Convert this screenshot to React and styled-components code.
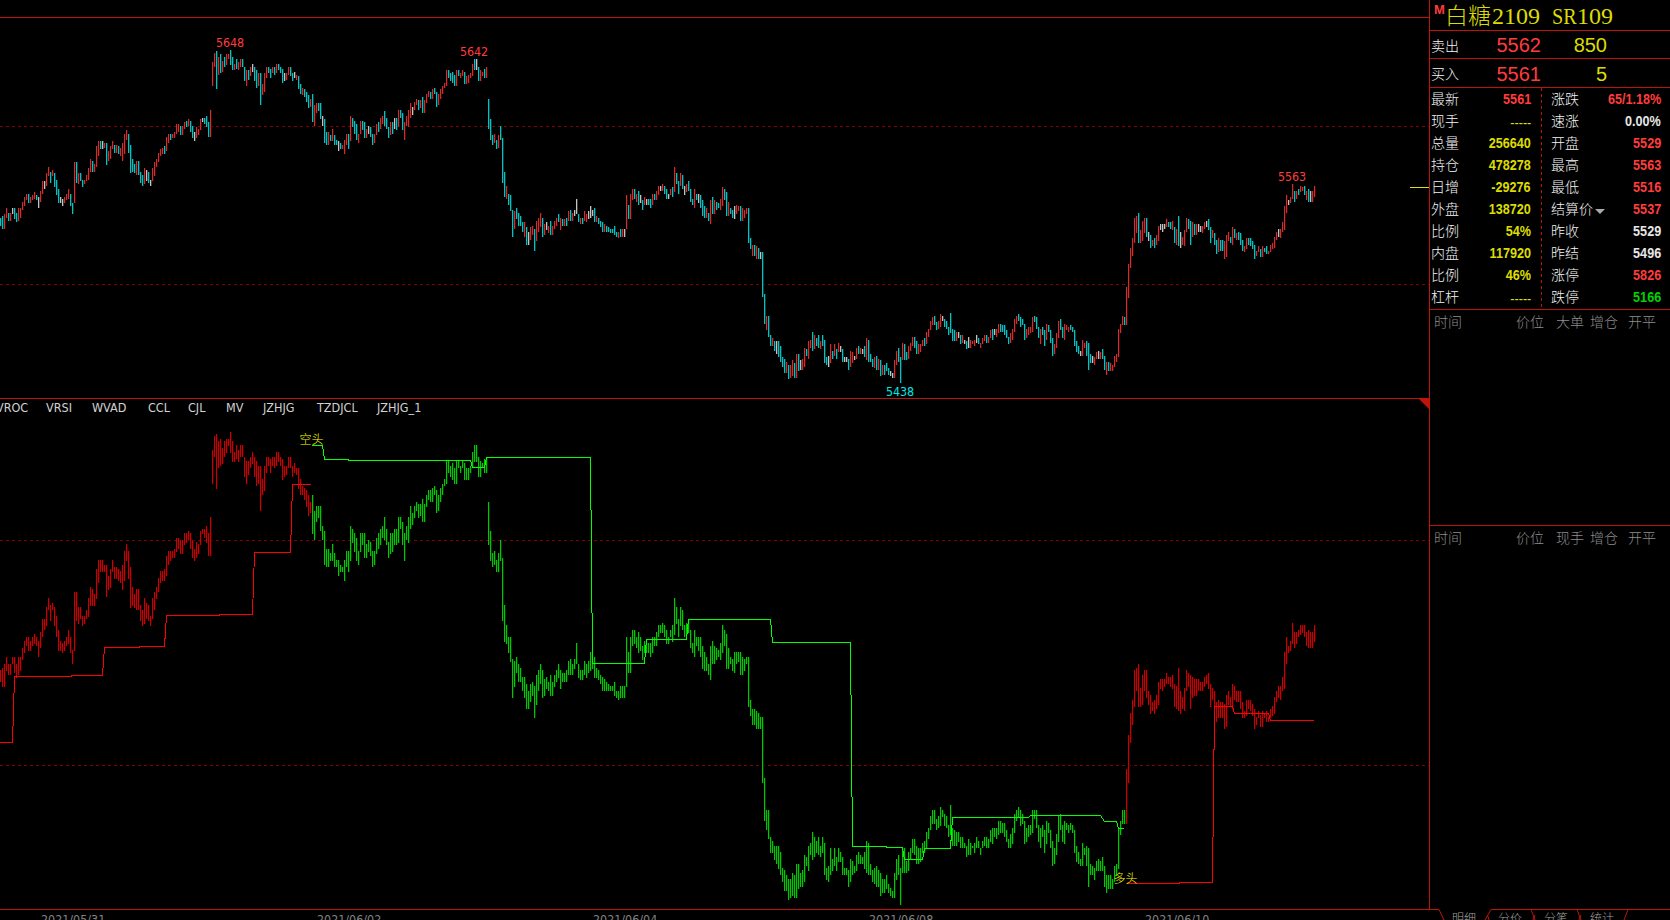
import React from 'react'
import styled, { createGlobalStyle } from 'styled-components'

// one bar every 2px: colour (r up, c down, w flat), high y, low y
const BARS = `
c218-226 c216-229 r214-229 r208-218 c213-221 r213-221 w208-214 c208-219 c213-222 r208-221
r208-218 r202-210 r197-206 r194-200 c194-203 r197-203 r195-200 r192-199 c195-200 w197-208
r191-202 r181-194 w181-189 r173-186 r167-176 c172-183 r170-176 c173-187 c180-195 c189-203
w197-203 w199-206 r197-203 r194-200 r189-199 c194-206 c203-214 r162-203 c162-183 r173-184
c173-181 c180-187 r180-184 r175-181 r168-180 r159-172 c161-172 r164-172 r146-167 r141-156
c141-149 w141-149 r143-148 c143-165 r151-161 r146-159 r141-149 c145-153 r145-153 c146-154
r148-156 r143-161 r134-154 r130-140 c134-153 c145-173 c159-172 c164-173 r161-175 c161-175
c172-183 c175-186 r168-184 w170-181 c172-183 w180-186 r168-181 r162-176 r159-167 r153-162
r149-156 r148-154 c146-154 r137-151 r134-143 c134-140 r134-138 r132-138 r124-134 r124-132
c126-135 r126-135 r122-129 c121-127 r119-126 c121-132 c126-138 w132-141 r127-138 r129-135
r119-130 w118-122 c118-124 c116-127 c122-137 r110-137 r62-86 r53-67 c51-89 r57-75
c54-73 r61-72 c57-67 r54-65 r54-59 c50-65 c57-70 r64-70 c59-69 r62-70
r59-67 c59-67 c67-81 r70-86 c70-80 r67-76 w64-72 c67-81 c70-88 r73-86
c73-105 r84-95 r73-92 r67-78 c67-73 c69-78 r67-73 c67-75 r64-73 c64-70
c67-73 c69-83 w73-81 r73-80 r67-75 c67-76 c73-81 w72-78 r75-80 c76-89
c84-94 r88-95 c89-97 c92-102 c95-108 r99-107 c94-122 r105-126 r103-113 c103-111
c103-119 w116-126 c119-143 c132-145 r132-145 c135-141 r129-141 c135-145 c140-145 w141-151
c143-149 r145-149 r140-154 r134-145 c134-149 r116-141 c118-127 c121-134 c124-140 r134-143
r121-134 c121-130 c122-138 r129-138 w126-134 c127-137 c134-145 r134-143 r124-135 c122-132
r118-129 r116-124 c111-126 c118-129 c127-138 r122-135 c122-134 w118-129 c118-130 r110-127
c110-118 c113-130 r122-140 r116-126 r110-127 r103-118 w107-115 r102-110 r99-105 c100-110
r100-108 c97-113 r100-113 r94-103 r91-97 c92-99 r89-99 c88-94 c92-107 r94-105
r89-99 r86-94 r83-88 r70-86 c70-78 c73-81 c72-83 c75-86 r70-86 c70-76
r73-78 r70-76 c72-84 r76-84 r75-83 r73-78 r64-76 c59-70 w59-70 c67-81
r70-81 r72-76 c69-78 r67-78 c99-129 c119-140 c135-145 r134-143 c140-149 r135-148
c126-140 c138-183 c172-197 r186-199 c194-205 c195-211 c210-237 r211-229 c208-219 c213-226
c216-226 c222-232 r222-237 c227-245 w232-245 r227-240 r226-235 c229-251 r221-241 r218-232
r213-227 c218-237 r224-235 w222-230 r226-233 c221-235 r226-235 r221-229 r218-226 c214-222
r218-230 c219-226 r219-226 c218-226 r211-221 c210-221 r213-221 w210-216 w199-214 c214-222
r218-224 c218-224 r211-221 r214-222 w211-219 w206-218 w210-216 c208-222 r216-222 c218-224
c221-227 c222-232 r224-232 c226-232 c227-232 c229-233 c229-233 c226-235 c232-237 r232-238
c229-237 r229-237 w229-237 r195-229 c205-219 r194-219 r189-200 c189-199 r194-202 c191-205
w195-203 c200-210 r197-205 w199-205 c199-205 c199-208 r194-205 c194-200 r191-200 r186-195
w186-191 r184-191 c186-194 c189-199 w194-199 r189-195 c187-197 r167-192 c173-184 c181-194
r173-186 c175-189 w186-195 r184-192 c181-191 c189-202 c199-205 r189-208 c194-200 w194-203
c195-208 c200-216 c206-218 r208-218 c213-221 r200-224 c197-214 r200-214 c202-210 c203-208
r199-210 r187-206 c189-200 c192-216 r202-216 c208-214 c210-218 w206-219 r205-214 r206-211
c206-221 r208-221 r210-218 r208-214 c208-243 c238-249 r245-256 c245-256 r246-259 c248-259
w252-259 c252-297 c294-324 r316-330 c316-337 c335-346 r338-346 c341-351 w341-354 c341-357
c346-362 c357-367 c359-373 r362-373 c365-379 r365-378 r360-376 c363-378 r354-378 c354-371
w360-370 r359-370 r348-367 c349-356 r341-359 r340-348 c332-351 r335-349 c338-346 c335-348
r341-349 c335-346 c340-363 c357-365 w356-367 r344-363 c351-359 r344-356 c349-359 r343-352
w346-352 c349-362 w357-362 w357-362 c359-370 r351-367 r352-363 w356-360 r348-359 c346-354
r348-354 w349-354 c346-357 r338-360 c340-362 c354-362 c359-367 r357-368 c356-370 r359-370
c360-376 r365-375 c365-375 c363-371 c368-375 w371-376 w373-378 r360-378 r351-365 c348-362
c357-383 r343-360 c344-360 c352-360 r346-359 r343-351 r337-346 c337-348 c341-354 r344-354
r344-352 r340-346 c338-346 r332-344 r329-337 r321-330 r317-325 c316-325 c322-330 r321-329
r314-327 w316-321 c319-327 c321-329 c327-335 c313-333 c329-341 c330-341 r332-341 w332-338
c335-344 r335-343 w340-344 c341-349 w337-348 r340-348 r341-344 r340-346 w335-343 c338-344
r343-348 r338-344 r335-341 c335-343 r337-343 r330-338 c329-340 w329-335 r329-337 r324-333
c324-332 c325-332 c325-335 c330-338 c337-344 r333-343 r329-340 r319-332 r316-324 c314-321
c317-327 c319-325 c324-340 r329-338 r327-335 r327-333 r317-332 c316-322 c317-329 c327-338
r329-344 c327-335 c330-346 r324-340 c325-332 c330-343 c338-356 r344-354 r333-348 r321-338
c319-330 c327-338 r324-340 r325-330 r327-332 c325-330 c327-332 c330-346 c341-352 c346-354
w351-356 r340-356 r343-348 c341-356 c343-370 c354-363 w356-363 r357-365 r352-359 w351-359
r352-359 c349-359 c356-370 r362-375 c362-371 r363-371 r365-371 r356-367 r354-362 r329-357
r324-333 r316-325 c317-325 r287-325 r264-298 r248-268 r238-256 r218-243 r216-233 c213-243
r230-243 r221-241 r218-233 c218-237 w232-241 c235-248 r240-246 c238-248 r235-245 r226-241
w224-230 w224-232 w224-229 r219-227 c222-227 c222-229 r221-230 c227-243 r229-245 c216-246
w232-248 r237-245 r230-246 r218-232 c219-229 c221-245 r222-237 c224-235 r224-235 w224-232
w226-232 r226-233 r222-229 w221-227 c219-230 c227-243 r230-238 c233-245 c240-254 r238-252
c240-251 c240-251 r241-259 r235-257 r232-241 c237-243 r227-245 c229-238 r233-240 c232-240
c233-245 c240-251 r246-252 r238-249 c238-245 c238-246 c241-249 c245-259 r251-256 r246-252
c249-257 r246-257 c248-252 c246-254 r251-254 r245-252 r243-249 r237-248 r232-240 w229-237
r229-238 r222-232 r206-230 r195-213 w200-205 r197-203 r184-199 c191-202 r191-199 c189-195
r186-192 r187-191 c186-195 r191-200 c189-202 w191-202 r191-202 r186-197
`.trim().split(/\s+/).map((s, i) => {
    const [top, bottom] = s.slice(1).split('-').map(Number)
    return { x: i * 2, kind: s[0], top, bottom }
})

const COLORS = {
    r: ['#d22d2d', '#340a0a'],
    c: ['#00c3c3', '#003e3e'],
    w: ['#c3c3c3', '#3c3c3c'],
}

// same ticks drawn on the taller scale of the indicator pane
const ticks = (y) => Math.round((y - 50) / 1.585)
const toIndicator = (y) => 432 + ticks(y) * 2.248

const SHORT_FROM = 312
const LONG_FROM = 1126

const LONG_LINE = '-1,742 12,742 14,676 71,676 71,675 102,675 104,647 139,647 139,646 164,646 166,615 219,615 219,614 252,614 254,552 290,552 292,484 310,484'
const SHORT_LINE = '311,445 322,445 324,459 348,459 348,460 470,460 472,467 484,467 486,457 590,457 592,663 644,663 646,639 686,639 688,619 770,619 772,642 850,642 852,846 886,846 886,847 902,847 904,859 922,859 924,848 950,848 952,817 1028,817 1030,815 1100,815 1104,821 1116,821 1118,828 1123,828'
const LONG_LINE_2 = '1126,883 1179,883 1179,882 1212,882 1214,706 1232,706 1234,713 1268,713 1270,720 1313,720'

const INDICATORS = [
    ['VROC', 50], ['VRSI', 46], ['WVAD', 56], ['CCL', 40], ['CJL', 38],
    ['MV', 37], ['JZHJG', 54], ['TZDJCL', 60], ['JZHJG_1', 60],
]

const DATES = [
    ['2021/05/31', 276], ['2021/06/02', 276], ['2021/06/04', 276],
    ['2021/06/08', 276], ['2021/06/10', 100],
]

const RED = '#ff3c3c'
const YELLOW = '#dcdc00'
const WHITE = '#e6e6e6'
const GREEN = '#00d200'

const QUOTES = [
    ['最新', '5561', RED, '涨跌', '65/1.18%', RED],
    ['现手', '-----', YELLOW, '速涨', '0.00%', WHITE],
    ['总量', '256640', YELLOW, '开盘', '5529', RED],
    ['持仓', '478278', YELLOW, '最高', '5563', RED],
    ['日增', '-29276', YELLOW, '最低', '5516', RED],
    ['外盘', '138720', YELLOW, '结算价', '5537', RED],
    ['比例', '54%', YELLOW, '昨收', '5529', WHITE],
    ['内盘', '117920', YELLOW, '昨结', '5496', WHITE],
    ['比例', '46%', YELLOW, '涨停', '5826', RED],
    ['杠杆', '-----', YELLOW, '跌停', '5166', GREEN],
]

function GridLine({ y, color }) {
    return <line x1="0" x2="1429" y1={y + 0.5} y2={y + 0.5} stroke={color} strokeDasharray="3 3" />
}

function PriceChart() {
    return (
        <Chart viewBox="0 18 1429 380" height="380">
            <GridLine y={126} color="#820000" />
            <GridLine y={284} color="#820000" />
            {BARS.map(({ x, kind, top, bottom }) => (
                <g key={x}>
                    <rect x={x} y={top} width="1" height={bottom - top} fill={COLORS[kind][0]} />
                    <rect x={x + 1} y={top} width="1" height={bottom - top} fill={COLORS[kind][1]} />
                </g>
            ))}
            <Mark x="216" y="47" textLength="28" fill={RED}>5648</Mark>
            <Mark x="460" y="56" textLength="28" fill={RED}>5642</Mark>
            <Mark x="1278" y="181" textLength="28" fill={RED}>5563</Mark>
            <Mark x="886" y="396" textLength="28" fill="#00e6e6">5438</Mark>
            <rect x="1410" y="187" width="19" height="1" fill="#e1e100" />
        </Chart>
    )
}

function IndicatorChart() {
    return (
        <Chart viewBox="0 417 1429 492" height="492">
            <GridLine y={540} color="#820000" />
            <GridLine y={765} color="#820000" />
            {BARS.map(({ x, top, bottom }) => {
                const short = x >= SHORT_FROM && x < LONG_FROM
                const y = Math.round(toIndicator(top))
                const height = Math.round(toIndicator(bottom) + 0.5) - y
                return (
                    <g key={x}>
                        <rect x={x} y={y} width="1" height={height} fill={short ? '#00c800' : '#c80000'} />
                        <rect x={x + 1} y={y} width="1" height={height} fill={short ? '#003200' : '#320000'} />
                    </g>
                )
            })}
            <Steps points={LONG_LINE} stroke="#f00" />
            <Steps points={SHORT_LINE} stroke="#0f0" />
            <Steps points={LONG_LINE_2} stroke="#f00" />
            <Signal x="299.5" y="444">空头</Signal>
            <Signal x="1113.5" y="883">多头</Signal>
        </Chart>
    )
}

function TradeList({ columns, height }) {
    return (
        <Trades $height={height}>
            <TradeHead>
                {columns.map((c) => <span key={c}>{c}</span>)}
            </TradeHead>
        </Trades>
    )
}

function QuotePanel() {
    return (
        <Side>
            <Title>
                <Main>M</Main>
                <Name>白糖</Name>
                <Code>2109</Code>
                <Letters>SR</Letters>
                <Code>109</Code>
            </Title>
            <Level $height={28}>
                <Label>卖出</Label>
                <Price>5562</Price>
                <Volume>850</Volume>
            </Level>
            <Level $height={29}>
                <Label>买入</Label>
                <Price>5561</Price>
                <Volume>5</Volume>
            </Level>
            <Quotes>
                <Column>
                    {QUOTES.map(([label, value, color], i) => (
                        <Quote key={i}>
                            <Label>{label}</Label>
                            <Value $color={color} $empty={value === '-----'}>{value}</Value>
                        </Quote>
                    ))}
                </Column>
                <Divider />
                <Column>
                    {QUOTES.map(([, , , label, value, color]) => (
                        <Quote key={label}>
                            <Label>{label}{label === '结算价' && <Arrow />}</Label>
                            <Value $color={color}>{value}</Value>
                        </Quote>
                    ))}
                </Column>
            </Quotes>
            <TradeList columns={['时间', '价位', '大单', '增仓', '开平']} height={215} />
            <TradeList columns={['时间', '价位', '现手', '增仓', '开平']} height={384} />
        </Side>
    )
}

function App() {
    return (
        <Screen>
            <GlobalStyle />
            <Body>
                <Charts>
                    <TopStrip />
                    <PriceChart />
                    <Indicators>
                        {INDICATORS.map(([name, width]) => <Indicator key={name} $width={width}>{name}</Indicator>)}
                        <Corner />
                    </Indicators>
                    <IndicatorChart />
                </Charts>
                <QuotePanel />
            </Body>
            <Footer>
                <Dates>
                    {DATES.map(([date, width]) => <DateLabel key={date} $width={width}>{date}</DateLabel>)}
                </Dates>
                <Tabs>
                    <TabEdges viewBox="0 0 241 11" width="241" height="11">
                        <path d="M0 .5H10L15 11M56 11L62 .5H241M60 11L58.5 6M102 .5L106 11M104 11L106 6M148 .5L152 11M150 11L152 6M199 .5L195 11" />
                    </TabEdges>
                    <Tab>明细</Tab>
                    <Tab>分价</Tab>
                    <Tab>分笔</Tab>
                    <Tab>统计</Tab>
                </Tabs>
            </Footer>
        </Screen>
    )
}

export default App

const line = '#be140a'
const cjk = '"Noto Sans CJK SC", sans-serif'
const ui = '"DejaVu Sans Condensed", "DejaVu Sans", sans-serif'

const GlobalStyle = createGlobalStyle`
    * {
        box-sizing: border-box;
    }

    body {
        margin: 0;
        background: #000;
        overflow: hidden;
    }
`

const Screen = styled.div`
    display: flex;
    flex-direction: column;
    width: 1670px;
    height: 920px;
    overflow: hidden;
    background: #000;
`

const Body = styled.div`
    display: flex;
    height: 909px;
`

const Charts = styled.div`
    width: 1429px;
`

const TopStrip = styled.div`
    height: 18px;
    border-bottom: 1px solid ${line};
`

const Chart = styled.svg`
    display: block;
    width: 1429px;
    shape-rendering: crispEdges;
`

const Mark = styled.text`
    font-family: ${ui};
    font-stretch: condensed;
    font-size: 12.4px;
`

const Signal = styled.text`
    font-family: ${cjk};
    font-size: 12px;
    font-weight: 300;
    fill: #ff0;
`

const Steps = styled.polyline.attrs({ transform: 'translate(.5 .5)' })`
    fill: none;
`

const Indicators = styled.div`
    position: relative;
    display: flex;
    height: 19px;
    border-top: 1px solid ${line};
    overflow: hidden;
`

const Indicator = styled.span`
    flex: none;
    width: ${(p) => p.$width}px;
    font-family: ${ui};
    font-stretch: condensed;
    font-size: 12.5px;
    line-height: 17px;
    color: #d2d2d2;

    &:first-child{
        margin-left: -4px;
    }
`

const Corner = styled.div`
    position: absolute;
    top: 0;
    right: 0;
    border-top: 10px solid ${line};
    border-left: 10px solid transparent;
`

const Side = styled.div`
    flex: 1;
    border-left: 1px solid ${line};
`

const Title = styled.div`
    display: flex;
    align-items: center;
    height: 31px;
    padding-left: 4px;
    border-bottom: 1px solid ${line};
    color: ${YELLOW};
    white-space: nowrap;
`

const Main = styled.span`
    align-self: flex-start;
    width: 11px;
    margin-top: 2px;
    font: bold 13px/15px "Liberation Sans", sans-serif;
    color: ${RED};
`

const Name = styled.span`
    width: 47px;
    padding-bottom: 1px;
    font-family: ${cjk};
    font-size: 23px;
    font-weight: 300;
    line-height: 29px;
`

const Code = styled.span`
    padding-top: 1px;
    font: 24px/30px "Liberation Serif", serif;
`

const Letters = styled(Code)`
    width: 25px;
    margin-left: 12px;
    transform: scaleX(0.84);
    transform-origin: left;
`

const Level = styled.div`
    display: grid;
    grid-template-columns: 51px 59px 66px;
    align-items: center;
    height: ${(p) => p.$height}px;
    padding-left: 1px;
    border-bottom: 1px solid ${line};
`

const Label = styled.span`
    display: flex;
    align-items: center;
    font-family: ${cjk};
    font-size: 14px;
    font-weight: 300;
    line-height: 20px;
    color: #f5f5f5;
`

const Price = styled.span`
    padding-top: 2px;
    font: 20px/25px "Liberation Sans", sans-serif;
    text-align: right;
    color: ${RED};
`

const Volume = styled(Price)`
    color: ${YELLOW};
`

const Quotes = styled.div`
    display: flex;
    height: 222px;
    padding-left: 1px;
    border-bottom: 1px solid ${line};
`

const Column = styled.div`
    width: 100px;

    &:last-child{
        width: 110px;
        margin-left: 9px;
    }
`

const Quote = styled.div`
    display: flex;
    justify-content: space-between;
    align-items: flex-start;
    height: 22px;
`

const Value = styled.span`
    padding-top: ${(p) => (p.$empty ? 2 : 0)}px;
    font: ${(p) => (p.$empty ? 'normal' : 'bold')} 14px/22px "Liberation Sans", sans-serif;
    color: ${(p) => p.$color};
    transform: scaleX(0.9);
    transform-origin: right;
`

const Divider = styled.div`
    width: 1px;
    height: 220px;
    margin-left: 10px;
    background: repeating-linear-gradient(${line} 0 3px, transparent 3px 6px);
`

const Arrow = styled.i`
    margin: 6px 0 0 2px;
    border: 5px solid transparent;
    border-top-color: #aaa;
    border-bottom: 0;
`

const Trades = styled.div`
    height: ${(p) => p.$height}px;

    & + &{
        border-top: 1px solid ${line};
    }
`

const TradeHead = styled.div`
    display: grid;
    grid-template-columns: 82px 40px 34px 38px 30px;
    padding-left: 4px;
    font-family: ${cjk};
    font-size: 14px;
    font-weight: 300;
    line-height: 22px;
    color: #8c8c8c;
`

const Footer = styled.div`
    display: flex;
    height: 11px;
    overflow: hidden;
`

const Dates = styled.div`
    display: flex;
    width: 1429px;
    padding-left: 41px;
    border-top: 1px solid ${line};
`

const DateLabel = styled.span`
    flex: none;
    width: ${(p) => p.$width}px;
    font-family: ${ui};
    font-stretch: condensed;
    font-size: 12.4px;
    line-height: 19px;
    color: #828282;
`

const Tabs = styled.div`
    position: relative;
    display: flex;
    width: 241px;
    padding-left: 23px;
`

const TabEdges = styled.svg`
    position: absolute;
    inset: 0;
    fill: none;
    stroke: ${line};
`

const Tab = styled.span`
    width: 46px;
    font-family: ${cjk};
    font-size: 12px;
    font-weight: 300;
    line-height: 18px;
    color: #a0a0a0;
`
